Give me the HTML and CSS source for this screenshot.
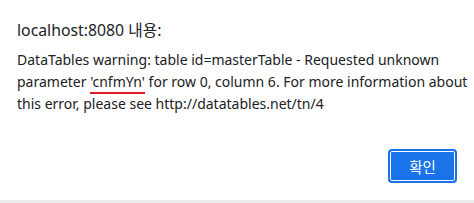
FILE: index.html
```html
<!DOCTYPE html>
<html lang="ko">
<head>
    <meta charset="UTF-8">
    <title>localhost:8080 내용</title>
    <link rel="stylesheet" href="styles.css">
</head>
<body>
    <div class="dialog">
        <h1 class="title">localhost:8080 내용:</h1>
        <p class="message">DataTables warning: table id=masterTable - Requested unknown parameter <span class="mark">'cnfmYn'</span> for row 0, column 6. For more information about this error, please see http://datatables.net/tn/4</p>
        <div class="actions">
            <button class="ok-btn">확인</button>
        </div>
    </div>
</body>
</html>
```

FILE: styles.css
```css
html, body {
    margin: 0;
    padding: 0;
    background-color: #ececec;
}

body {
    width: 474px;
    height: 203px;
    font-family: "Noto Sans", "Noto Sans CJK KR", sans-serif;
}

.dialog {
    height: 200px;
    box-sizing: border-box;
    background-color: white;
    padding: 19px 2px 0 17px;
    display: flex;
    flex-direction: column;
}

.title {
    margin: 0;
    font-size: 15.8px;
    font-weight: normal;
    line-height: 22px;
    color: #202124;
}

.message {
    margin: 8px 0 0 0;
    font-size: 14px;
    line-height: 22px;
    color: #202124;
}

.mark {
    background-image: linear-gradient(#e01b24, #e01b24);
    background-size: 100% 2px;
    background-position: 0 100%;
    background-repeat: no-repeat;
    padding-bottom: 3px;
}

.actions {
    display: flex;
    justify-content: flex-end;
    margin-top: 34px;
    padding-right: 15px;
}

.ok-btn {
    width: 69px;
    height: 34px;
    border: 2px solid #1a73e8;
    border-radius: 4px;
    box-shadow: inset 0 0 0 1px white;
    background-color: #1a73e8;
    color: white;
    font-family: "Noto Sans CJK KR", sans-serif;
    font-size: 14.5px;
    cursor: pointer;
}
```
